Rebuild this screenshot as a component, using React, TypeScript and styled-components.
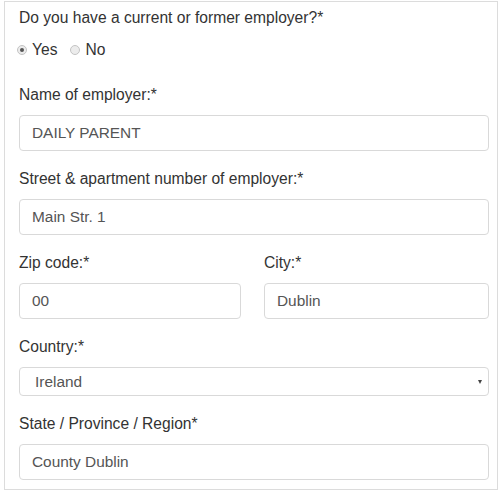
import React from "react";
import styled, { createGlobalStyle } from "styled-components";

const GlobalStyle = createGlobalStyle`
  html, body {
    margin: 0;
    padding: 0;
    background: #ffffff;
  }
  body {
    font-family: "Liberation Sans", Arial, sans-serif;
    font-size: 15.6px;
    color: #333333;
  }
`;

const Panel = styled.div`
  box-sizing: border-box;
  width: 494px;
  height: 489px;
  margin: 1px 0 0 4px;
  padding: 6px 8px 9px 14px;
  border: 1px solid #dcdcdc;
`;

const Question = styled.div`
  line-height: 20px;
`;

const RadioRow = styled.div`
  display: flex;
  align-items: center;
  gap: 13px;
  margin: 12px 0 25px -2px;
  line-height: 20px;
`;

const RadioOption = styled.label`
  display: flex;
  align-items: center;
  gap: 5px;
`;

const RadioDot = styled.span<{ $checked?: boolean }>`
  box-sizing: border-box;
  width: 10px;
  height: 10px;
  border-radius: 50%;
  border: 1px solid #c4c4c4;
  background: #ececec;
  position: relative;

  &::after {
    content: "";
    display: ${(p) => (p.$checked ? "block" : "none")};
    position: absolute;
    left: 2px;
    top: 2px;
    width: 4px;
    height: 4px;
    border-radius: 50%;
    background: #555555;
  }
`;

const Group = styled.div`
  margin-bottom: 18px;

  &:last-child {
    margin-bottom: 0;
  }
`;

const Label = styled.div`
  line-height: 20px;
  margin-bottom: 10px;
`;

const Field = styled.div<{ $select?: boolean }>`
  box-sizing: border-box;
  height: ${(p) => (p.$select ? "29px" : "36px")};
  display: flex;
  align-items: center;
  justify-content: space-between;
  padding: 0 ${(p) => (p.$select ? "6px 0 15px" : "12px")};
  border: 1px solid #d9d9d9;
  border-radius: 4px;
  background: #ffffff;
  color: #555555;
  font-size: 15.4px;
`;

const Caret = styled.span`
  width: 0;
  height: 0;
  border-left: 2.5px solid transparent;
  border-right: 2.5px solid transparent;
  border-top: 4px solid #444444;
`;

const TwoCols = styled.div`
  display: grid;
  grid-template-columns: 222px 1fr;
  column-gap: 23px;
`;

const App: React.FC = () => {
  return (
    <>
      <GlobalStyle />
      <Panel>
        <Question>Do you have a current or former employer?*</Question>
        <RadioRow>
          <RadioOption>
            <RadioDot $checked />
            Yes
          </RadioOption>
          <RadioOption>
            <RadioDot />
            No
          </RadioOption>
        </RadioRow>

        <Group>
          <Label>Name of employer:*</Label>
          <Field>DAILY PARENT</Field>
        </Group>

        <Group>
          <Label>Street &amp; apartment number of employer:*</Label>
          <Field>Main Str. 1</Field>
        </Group>

        <Group>
          <TwoCols>
            <div>
              <Label>Zip code:*</Label>
              <Field>00</Field>
            </div>
            <div>
              <Label>City:*</Label>
              <Field>Dublin</Field>
            </div>
          </TwoCols>
        </Group>

        <Group>
          <Label>Country:*</Label>
          <Field $select>
            Ireland
            <Caret />
          </Field>
        </Group>

        <Group>
          <Label>State / Province / Region*</Label>
          <Field>County Dublin</Field>
        </Group>
      </Panel>
    </>
  );
};

export default App;
